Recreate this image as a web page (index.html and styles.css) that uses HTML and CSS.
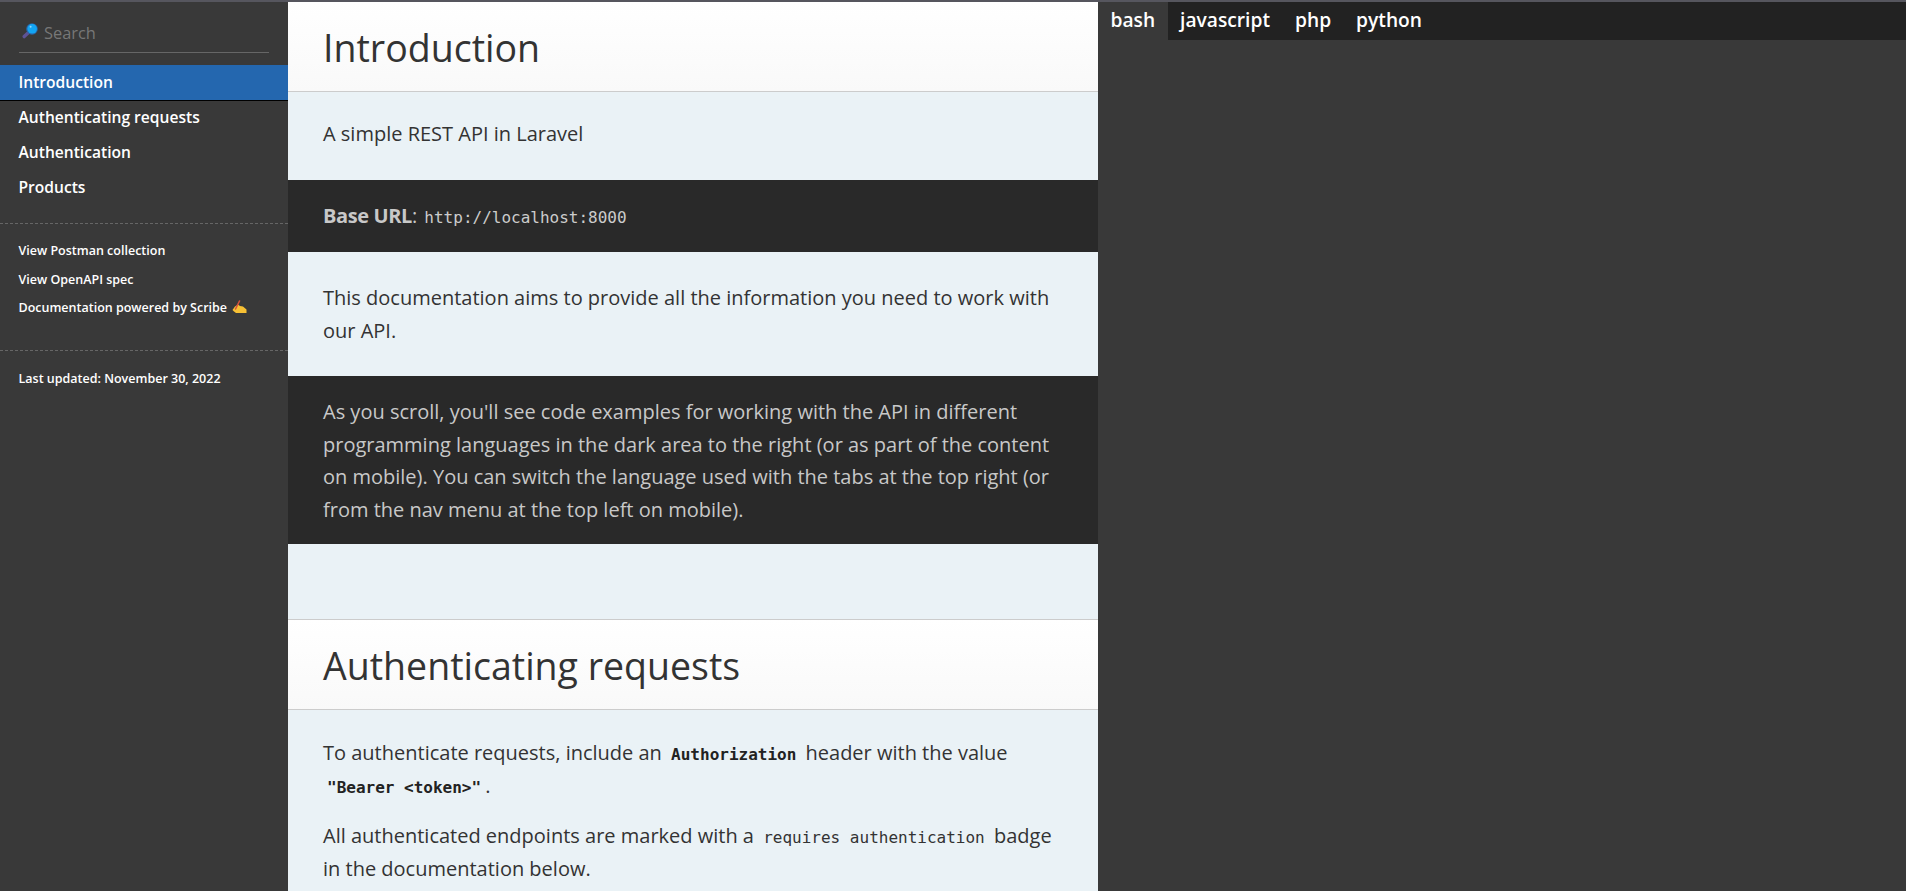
FILE: index.html
```html
<!DOCTYPE html>
<html lang="en">
<head>
<meta charset="utf-8">
<title>Laravel API Documentation</title>
<link rel="stylesheet" href="styles.css">
</head>
<body>
<div class="page">
  <aside class="sidebar">
    <div class="search">
      <svg class="search-icon" width="16" height="16" viewBox="0 0 16 16" aria-hidden="true">
        <path d="M6.5 9.5 L2.2 13.6" stroke="#5d5396" stroke-width="3.4" stroke-linecap="round"/>
        <circle cx="10" cy="6" r="5.8" fill="#2a66a8"/>
        <circle cx="10.2" cy="5.8" r="4.8" fill="#12a5f4"/>
        <circle cx="8.6" cy="3.8" r="1" fill="#8fd6fb"/>
      </svg>
      <span class="search-text">Search</span>
    </div>
    <nav class="toc">
      <a class="toc-item active">Introduction</a>
      <a class="toc-item">Authenticating requests</a>
      <a class="toc-item">Authentication</a>
      <a class="toc-item">Products</a>
    </nav>
    <ul class="footer-links">
      <li>View Postman collection</li>
      <li>View OpenAPI spec</li>
      <li>Documentation powered by Scribe
        <svg class="writing-hand" width="15" height="14" viewBox="0 0 15 14" aria-hidden="true">
          <path d="M0.5 10 L3 6.5 L6 4.5 L8 6 L11 6.5 L14.5 9.5 L14.5 13 L4 13 L2 11.5 Z" fill="#f7c034"/>
          <path d="M3.5 9 L7.5 1" stroke="#d8503c" stroke-width="1.6" stroke-linecap="round"/>
        </svg>
      </li>
    </ul>
    <ul class="last-updated">
      <li>Last updated: November 30, 2022</li>
    </ul>
  </aside>
  <main class="content">
    <h1 class="heading">Introduction</h1>
    <section class="light first">
      <p>A simple REST API in Laravel</p>
    </section>
    <aside class="dark base-url">
      <strong>Base URL</strong>: <code>http://localhost:8000</code>
    </aside>
    <section class="light docs">
      <p>This documentation aims to provide all the information you need to work with our API.</p>
    </section>
    <aside class="dark note">
      As you scroll, you'll see code examples for working with the API in different programming languages in the dark area to the right (or as part of the content on mobile). You can switch the language used with the tabs at the top right (or from the nav menu at the top left on mobile).
    </aside>
    <div class="spacer"></div>
    <h1 class="heading second">Authenticating requests</h1>
    <section class="light auth">
      <p>To authenticate requests, include an <code class="strong">Authorization</code> header with the value <code class="strong">"Bearer &lt;token&gt;"</code>.</p>
      <p>All authenticated endpoints are marked with a <code>requires authentication</code> badge in the documentation below.</p>
    </section>
  </main>
  <div class="code-pane">
    <div class="lang-tabs">
      <a class="tab active">bash</a>
      <a class="tab">javascript</a>
      <a class="tab">php</a>
      <a class="tab">python</a>
    </div>
  </div>
</div>
</body>
</html>
```
FILE: styles.css
```css
* { box-sizing: border-box; }
html, body { margin: 0; height: 100%; overflow: hidden; }
body {
  font-family: "Open Sans", "Liberation Sans", sans-serif;
  font-size: 20px;
  line-height: 32.5px;
  color: #333;
  background: #393939;
}
.page {
  display: flex;
  height: 100vh;
  overflow: hidden;
  border-top: 2px solid #56565e;
}
.sidebar {
  width: 288px;
  flex: none;
  background: #393939;
  color: #fff;
  font-size: 15.6px;
  font-weight: 600;
}
.search {
  display: flex;
  align-items: center;
  gap: 6px;
  height: 51px;
  margin: 0 19px;
  padding: 12px 0 0 3px;
  border-bottom: 1px solid #666;
  font-weight: 400;
  font-size: 16.4px;
  color: #777;
}
.search-icon { flex: none; margin-top: -4px; }
.search-text { line-height: 20px; }
.toc {
  display: flex;
  flex-direction: column;
  margin-top: 12px;
  padding-bottom: 18px;
  border-bottom: 1px dashed #666;
}
.toc-item {
  display: block;
  height: 35px;
  line-height: 34px;
  padding-left: 18.5px;
  white-space: nowrap;
}
.toc-item.active {
  background: #2467af;
  border-bottom: 1px solid #000;
  height: 36px;
  margin-bottom: -1px;
}
ul { list-style: none; margin: 0; padding: 0; }
.footer-links, .last-updated {
  font-size: 12.5px;
  line-height: 28.5px;
  padding-left: 18.5px;
}
.footer-links {
  padding-top: 13px;
  padding-bottom: 27px;
  border-bottom: 1px dashed #666;
}
.writing-hand { vertical-align: -2px; margin-left: 2px; }
.last-updated { padding-top: 14px; }
.content {
  width: 810px;
  flex: none;
  background: #eaf2f6;
  overflow: hidden;
}
.heading {
  margin: 0;
  height: 90px;
  padding: 1px 35px 0;
  font-size: 37.5px;
  font-weight: 400;
  line-height: 89px;
  color: #333;
  background: linear-gradient(to bottom, #fff, #f9f9f9);
  border-bottom: 1px solid #ccc;
}
.heading.second { border-top: 1px solid #ccc; height: 91px; }
.light { padding: 0 35px; }
.light p { margin: 0; }
.first { padding-top: 26px; height: 88px; }
.dark {
  display: block;
  background: #292929;
  color: #c8c8c8;
  padding: 0 35px;
}
.base-url { height: 72px; line-height: 71px; }
.base-url strong { font-weight: 700; letter-spacing: -0.4px; }
code { font-family: "DejaVu Sans Mono", "Liberation Mono", monospace; font-size: 16px; line-height: 1; }
.base-url code { color: #ccc; margin-left: 2px; }
.docs { padding-top: 30px; height: 124px; }
.note { padding-top: 20px; height: 168px; }
.spacer { height: 75px; }
.auth { padding-top: 27px; }
.auth p + p { margin-top: 18px; }
.auth code { margin: 0 4px; color: #333; }
.auth code.strong { font-weight: 700; color: #222; }
.code-pane {
  flex: 1;
  background: #393939;
}
.lang-tabs {
  display: flex;
  background: #222;
  height: 38px;
  font-size: 19.2px;
  font-weight: 600;
  line-height: 36px;
  color: #fff;
}
.tab { padding: 0 12.5px; }
.tab.active { background: #393939; }
```
